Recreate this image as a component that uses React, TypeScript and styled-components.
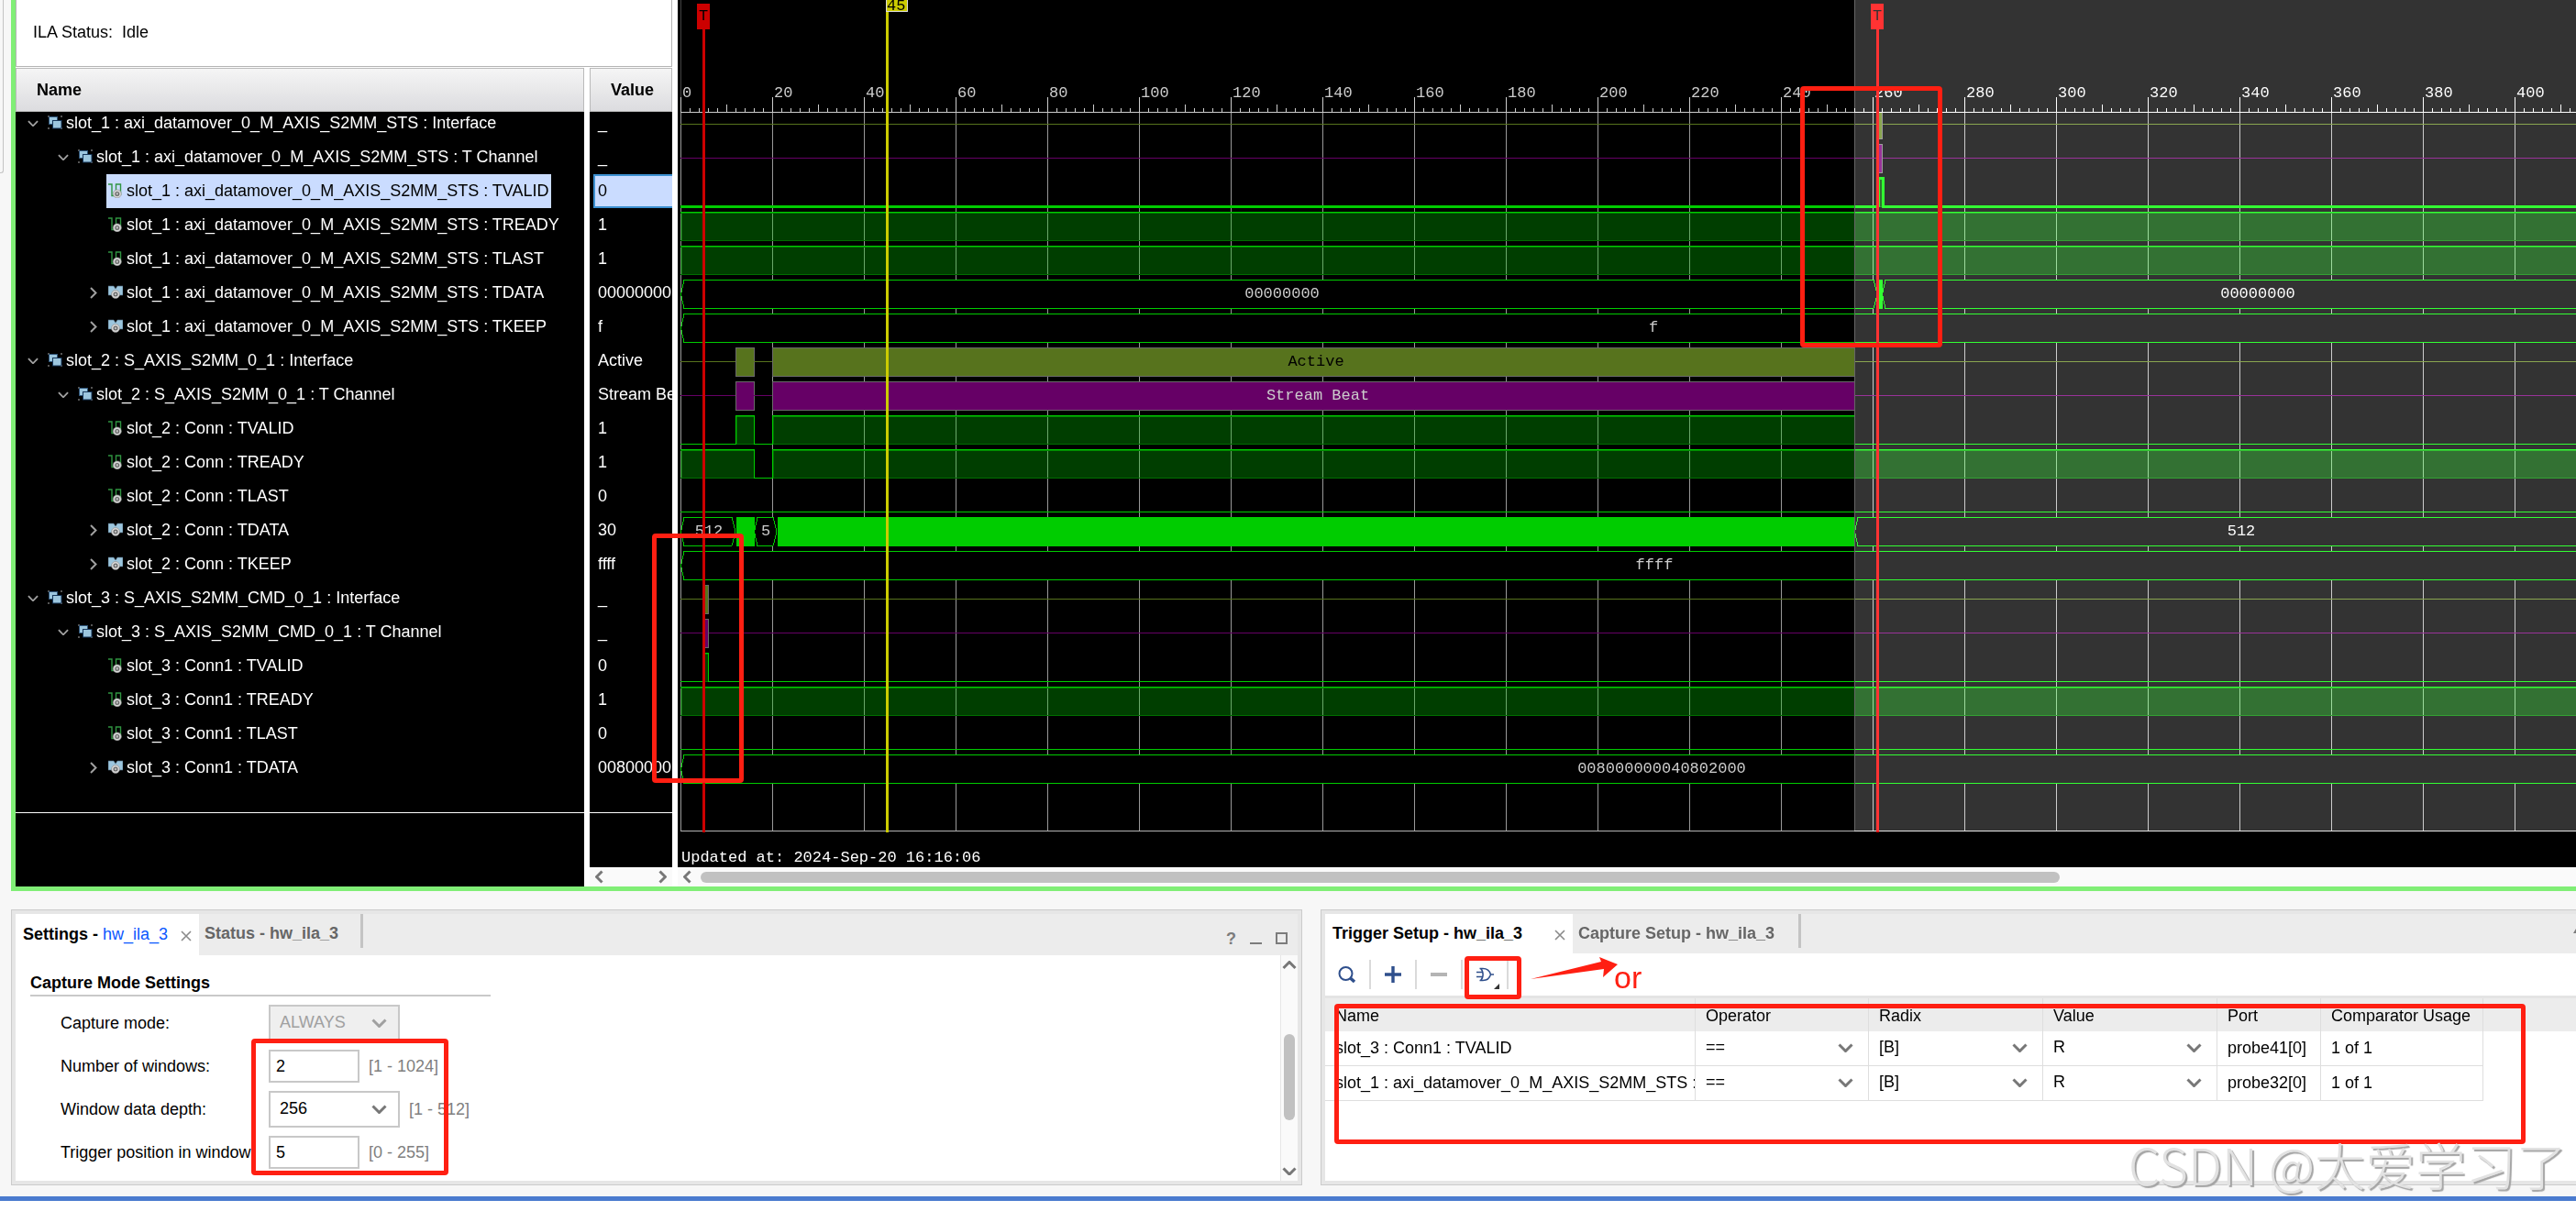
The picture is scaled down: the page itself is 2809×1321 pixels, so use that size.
import React from "react";
import styled, { createGlobalStyle, css } from "styled-components";

const sans = `"Liberation Sans", Arial, sans-serif`;
const mono = `"Liberation Mono", "Courier New", monospace`;

const GlobalStyle = createGlobalStyle`
  * { box-sizing: border-box; }
  body { margin: 0; background: #fff; font: 18px/22px ${sans}; color: #000; }
  button, input, select { font: inherit; color: inherit; margin: 0; }
`;

const ROW = 37;

/* ---------- page frame ---------- */

const Page = styled.div`
  position: relative;
  overflow: hidden;
  background: #f7f7f7;
`;

const Top = styled.div`
  display: flex;
`;

const Sliver = styled.div`
  width: 12px;
  flex: none;
  &::before {
    content: "";
    display: block;
    width: 3px;
    height: 188px;
    border: 1px solid #c4c4c4;
    border-width: 0 1px 1px 0;
    border-bottom-right-radius: 3px;
  }
`;

const Workspace = styled.main`
  flex: 1;
  min-width: 0;
  display: flex;
  gap: 6px;
  background: #fff;
  border: solid #80ee76;
  border-width: 0 0 5px 5px;
`;

const SignalPane = styled.section`
  flex: none;
  display: flex;
  flex-direction: column;
`;

const StatusBar = styled.div`
  height: 73px;
  margin-bottom: 1px;
  padding: 24px 18px 0;
  border: solid #b4b4b4;
  border-width: 0 1px 1px 1px;
  white-space: pre;
`;

const Columns = styled.div`
  flex: 1;
  display: grid;
  grid-template-columns: 620px 90px;
  gap: 6px;
`;

const Column = styled.div`
  display: flex;
  flex-direction: column;
  min-width: 0;
`;

const ColumnHead = styled.div`
  height: 48px;
  padding: 0 22px;
  line-height: 46px;
  font-weight: bold;
  background: linear-gradient(#f5f5f5, #dcdcdf);
  border: 1px solid #bababa;
`;

const DarkArea = styled.div`
  flex: 1;
  overflow: hidden;
  background: #000;
  color: #fff;
`;

const List = styled.ul`
  list-style: none;
  margin: -6px 0 0;
  padding: 0 0 30px;
  border-bottom: 1px solid #fff;
`;

const TreeRow = styled.li<{ $level: number }>`
  display: flex;
  align-items: center;
  height: ${ROW}px;
  padding-left: ${(p) => 13 + p.$level * 33}px;
`;

const Toggle = styled.button`
  display: flex;
  justify-content: center;
  width: 12px;
  padding: 0;
  border: 0;
  background: none;
`;

const TogglePlaceholder = styled.span`
  width: 12px;
`;

const NodeLabel = styled.span<{ $selected?: boolean }>`
  display: flex;
  align-items: center;
  gap: 4px;
  height: ${ROW}px;
  margin-left: 8px;
  padding: 0 2px 2px;
  white-space: nowrap;
  ${(p) =>
    p.$selected &&
    css`
      background: #cadcff;
      color: #000;
    `}
`;

const ValueRow = styled.li<{ $selected?: boolean }>`
  height: ${ROW}px;
  margin-left: 4px;
  padding-left: 5px;
  line-height: 36px;
  white-space: nowrap;
  overflow: hidden;
  ${(p) =>
    p.$selected &&
    css`
      padding-left: 3px;
      line-height: 32px;
      background: #cadcff;
      color: #000;
      border: solid #3c90d0;
      border-width: 2px 0 2px 2px;
    `}
`;

const HScroll = styled.div`
  flex: none;
  display: flex;
  align-items: center;
  justify-content: space-between;
  height: 21px;
  padding: 0 6px;
  background: #fafafa;
`;

const HThumb = styled.div`
  width: 72%;
  margin: 0 auto 0 10px;
  height: 12px;
  border-radius: 6px;
  background: #c1c1c1;
`;

const ArrowButton = styled.button`
  display: flex;
  padding: 0;
  border: 0;
  background: none;
`;

const WavePane = styled.section`
  flex: 1;
  min-width: 0;
  display: flex;
  flex-direction: column;
`;

const WaveCanvas = styled.svg`
  display: block;
  width: 100%;
  flex: 1 0 946px;
  background: #000;
  font: 17px ${mono};
  shape-rendering: crispEdges;
`;

const Brighten = styled.rect`
  mix-blend-mode: plus-lighter;
`;

/* ---------- lower panels ---------- */

const Bottom = styled.div`
  display: grid;
  grid-template-columns: minmax(0, 1408fr) minmax(0, 1369fr);
  gap: 20px;
  padding: 20px 0 12px 12px;
`;

const Panel = styled.section<{ $open?: boolean }>`
  display: flex;
  flex-direction: column;
  padding: ${(p) => (p.$open ? "4px 0 4px 4px" : "4px")};
  background: #e6e6e6;
  border: solid #cbcbcb;
  border-width: ${(p) => (p.$open ? "1px 0 1px 1px" : "1px")};
`;

const TabBar = styled.div<{ $h: number }>`
  display: flex;
  height: ${(p) => p.$h}px;
  background: #ececec;
`;

const Tab = styled.div<{ $active?: boolean; $w: number }>`
  display: flex;
  align-items: center;
  width: ${(p) => p.$w}px;
  padding: 0 8px 2px;
  font-weight: bold;
  white-space: pre;
  background: ${(p) => (p.$active ? "#fff" : "none")};
  color: ${(p) => (p.$active ? "#000" : "#666")};
  ${(p) =>
    !p.$active &&
    css`
      height: 37px;
      padding: 4px 6px 0;
      border-right: 3px solid #c4c4c4;
    `}
`;

const TabLink = styled.a`
  color: #0a57ff;
  font-weight: normal;
  text-decoration: none;
`;

const Close = styled.button`
  display: flex;
  margin-left: auto;
  padding: 4px 0 0;
  border: 0;
  background: none;
`;

const PanelTools = styled.div`
  display: flex;
  align-items: center;
  gap: 15px;
  margin-left: auto;
  padding: 8px 10px 0 0;
  color: #7c7c7c;
  font-weight: bold;
  font-size: 18px;
`;

const EdgeArrow = styled.svg`
  margin: 15px 0 0 auto;
`;

const SettingsBody = styled.div`
  flex: 1;
  display: flex;
  justify-content: space-between;
  background: #fff;
`;

const Form = styled.form`
  padding: 21px 16px 13px;
`;

const FormTitle = styled.h2`
  width: 502px;
  margin: 0 0 9px;
  padding-bottom: 4px;
  font-size: 18px;
  line-height: 18px;
  border-bottom: 2px solid #c9c9c9;
`;

const Fields = styled.div`
  display: grid;
  grid-template-columns: 227px auto;
  row-gap: 9px;
  align-items: center;
  padding-left: 33px;
`;

const FieldLabel = styled.label`
  white-space: nowrap;
`;

const Control = styled.div`
  display: flex;
  align-items: center;
  gap: 10px;
  color: #808080;
`;

const TextBox = styled.input`
  width: 99px;
  height: 36px;
  padding: 0 6px;
  color: #000;
  background: #fff;
  border: 2px solid #c8c8c8;
`;

const Combo = styled.div<{ $w?: string }>`
  display: grid;
  align-items: center;
  width: ${(p) => p.$w || "100%"};
  & > * {
    grid-area: 1 / 1;
  }
  & > svg {
    justify-self: end;
    pointer-events: none;
  }
`;

const BoxSelect = styled.select`
  appearance: none;
  height: 40px;
  padding: 0 10px 2px;
  color: #000;
  background: #fff;
  border: 2px solid #c8c8c8;
  border-radius: 0;
  &:disabled {
    color: #a0a0a0;
    background: #efefef;
    opacity: 1;
  }
  & + svg {
    margin-right: 14px;
  }
`;

const CellSelect = styled.select`
  appearance: none;
  width: 100%;
  height: 35px;
  padding: 0 0 2px;
  background: none;
  border: 0;
  & + svg {
    margin-right: 16px;
  }
`;

const VScroll = styled.div`
  display: flex;
  flex-direction: column;
  align-items: center;
  width: 19px;
  padding: 6px 0;
  background: #fafafa;
  border-left: 1px solid #e6e6e6;
`;

const VThumb = styled.div`
  width: 12px;
  height: 94px;
  margin: 70px 0 auto;
  border-radius: 6px;
  background: #c1c1c1;
`;

const Toolbar = styled.div`
  display: flex;
  height: 49px;
  padding-top: 7px;
  background: #fff;
  border-bottom: 3px solid #e4e4e4;
`;

const Tool = styled.button`
  display: flex;
  align-items: center;
  justify-content: center;
  width: 50px;
  height: 32px;
  padding: 0;
  border: 0;
  border-right: 2px solid #dadada;
  background: none;
`;

const TableArea = styled.div`
  flex: 1;
  background: #fff;
`;

const ProbeTable = styled.table`
  width: 100%;
  table-layout: fixed;
  border-spacing: 0;
  th,
  td {
    height: ${ROW}px;
    padding: 0 0 0 11px;
    text-align: left;
    font-weight: normal;
    white-space: nowrap;
    overflow: hidden;
    border-right: 1px solid #dedede;
  }
  th {
    height: 36px;
    padding-top: 2px;
    background: #ececec;
  }
  td {
    padding-bottom: 2px;
    border-bottom: 1px solid #dedede;
  }
  th:last-child,
  td:last-child {
    border: 0;
  }
`;

const Footer = styled.div`
  height: 16px;
  background: #fff;
  border-top: 5px solid #4a7bcf;
`;

/* ---------- marks drawn over the window ---------- */

const Mark = styled.div<{ $x: number; $y: number; $w: number; $h: number }>`
  position: absolute;
  left: ${(p) => p.$x}px;
  top: ${(p) => p.$y}px;
  width: ${(p) => p.$w}px;
  height: ${(p) => p.$h}px;
  border: 5px solid #ff1f12;
  border-radius: 4px;
  pointer-events: none;
`;

const ArrowMark = styled.svg`
  position: absolute;
  left: 1665px;
  top: 1043px;
`;

const OrMark = styled.span`
  position: absolute;
  left: 1760px;
  top: 1046px;
  font-size: 34px;
  line-height: 40px;
  color: #ff1f12;
`;

const Watermark = styled.span`
  position: absolute;
  right: 10px;
  top: 1231px;
  font: 300 55px/76px "Noto Sans CJK SC", sans-serif;
  white-space: nowrap;
  color: #e2e2e2;
  text-shadow: 2px 2px 1px #a4a4a4;
`;

/* ---------- icons ---------- */

type Dir = "up" | "down" | "left" | "right";
const chevronPaths: Record<Dir, string> = {
  down: "M0 0L5 5L10 0",
  up: "M0 5L5 0L10 5",
  right: "M0 0L5 5L0 10",
  left: "M5 0L0 5L5 10",
};

function Chevron({ dir, size = 12, stroke = 2, color = "#777" }: { dir: Dir; size?: number; stroke?: number; color?: string }) {
  const wide = dir === "up" || dir === "down";
  const k = 10 / (size - stroke);
  const pad = (stroke * k) / 2;
  const w = (wide ? 10 : 5) + pad * 2;
  const h = (wide ? 5 : 10) + pad * 2;
  return (
    <svg width={w / k} height={h / k} viewBox={`${-pad} ${-pad} ${w} ${h}`} aria-hidden>
      <path d={chevronPaths[dir]} fill="none" stroke={color} strokeWidth={stroke * k} />
    </svg>
  );
}

const InterfaceIcon = () => (
  <svg width="16" height="16" viewBox="0 0 16 16" aria-hidden>
    <path d="M0 0h2v2h-2zM14 0h2v2h-2zM0 13h2v2h-2zM14 13h2v2h-2z" fill="#555" />
    <rect x="1.5" y="1.5" width="9" height="8" fill="#9cc6de" stroke="#2f5478" />
    <rect x="5.5" y="5.5" width="9.5" height="8.5" fill="#9cc6de" stroke="#16365a" />
  </svg>
);

const Gear = ({ cx, cy }: { cx: number; cy: number }) => (
  <g>
    <circle cx={cx} cy={cy} r="4.5" fill="#d6d6d6" stroke="#8a8a8a" strokeWidth="0.6" />
    <circle cx={cx} cy={cy} r="1.9" fill="#bbb" stroke="#666" strokeWidth="1.2" />
  </g>
);

const SignalIcon = () => (
  <svg width="16" height="16" viewBox="0 0 16 16" aria-hidden>
    <path d="M0 1H4V13.5H8.5V1H13.5V13" fill="none" stroke="#2f9440" strokeWidth="1.4" />
    <Gear cx={9.8} cy={11.4} />
  </svg>
);

const BusIcon = () => (
  <svg width="16" height="16" viewBox="0 0 16 16" aria-hidden>
    <path d="M0 1H6L8 4L10 1H16V11H12L8 7L4 11H0Z" fill="#9cc6de" stroke="#4a6478" strokeWidth="0.6" />
    <Gear cx={8} cy={10} />
  </svg>
);

const CloseIcon = () => (
  <svg width="12" height="12" viewBox="0 0 12 12" aria-hidden>
    <path d="M1 1L11 11M11 1L1 11" stroke="#8a8a8a" strokeWidth="1.6" />
  </svg>
);

/* ---------- data ---------- */

type Kind = "iface" | "signal" | "bus";
interface Segment {
  from: number;
  to?: number;
  kind: "high" | "low" | "bus" | "solid" | "box" | "idle";
  text?: string;
  at?: number;
}
interface Signal {
  level: number;
  kind: Kind;
  name: string;
  value: string;
  selected?: boolean;
  tone?: "olive" | "purple";
  wave: Segment[];
}

const sts = "axi_datamover_0_M_AXIS_S2MM_STS";
const burst = (text: string, at: number): Segment[] => [
  { from: 0, to: 12, kind: "idle" },
  { from: 12, to: 16, kind: "box" },
  { from: 16, to: 20, kind: "idle" },
  { from: 20, to: 256, kind: "box", text, at },
  { from: 256, kind: "idle" },
];
const blip = (at: number): Segment[] => [
  { from: 0, kind: "idle" },
  { from: at, to: at + 1, kind: "box" },
];
const pulse = (at: number): Segment[] => [
  { from: 0, to: at, kind: "low" },
  { from: at, to: at + 1, kind: "high" },
  { from: at + 1, kind: "low" },
];
const high: Segment[] = [{ from: 0, kind: "high" }];
const low: Segment[] = [{ from: 0, kind: "low" }];

const signals: Signal[] = [
  { level: 0, kind: "iface", name: `slot_1 : ${sts} : Interface`, value: "_", tone: "olive", wave: blip(261) },
  { level: 1, kind: "iface", name: `slot_1 : ${sts} : T Channel`, value: "_", tone: "purple", wave: blip(261) },
  { level: 2, kind: "signal", name: `slot_1 : ${sts} : TVALID`, value: "0", selected: true, wave: pulse(261) },
  { level: 2, kind: "signal", name: `slot_1 : ${sts} : TREADY`, value: "1", wave: high },
  { level: 2, kind: "signal", name: `slot_1 : ${sts} : TLAST`, value: "1", wave: high },
  {
    level: 2, kind: "bus", name: `slot_1 : ${sts} : TDATA`, value: "00000000",
    wave: [
      { from: 0, to: 261, kind: "bus", text: "00000000", at: 659 },
      { from: 261, to: 262, kind: "solid" },
      { from: 262, kind: "bus", text: "00000000", at: 1723 },
    ],
  },
  { level: 2, kind: "bus", name: `slot_1 : ${sts} : TKEEP`, value: "f", wave: [{ from: 0, kind: "bus", text: "f", at: 1064 }] },
  { level: 0, kind: "iface", name: "slot_2 : S_AXIS_S2MM_0_1 : Interface", value: "Active", tone: "olive", wave: burst("Active", 696) },
  { level: 1, kind: "iface", name: "slot_2 : S_AXIS_S2MM_0_1 : T Channel", value: "Stream Beat", tone: "purple", wave: burst("Stream Beat", 698) },
  {
    level: 2, kind: "signal", name: "slot_2 : Conn : TVALID", value: "1",
    wave: [
      { from: 0, to: 12, kind: "low" },
      { from: 12, to: 16, kind: "high" },
      { from: 16, to: 20, kind: "low" },
      { from: 20, to: 256, kind: "high" },
      { from: 256, kind: "low" },
    ],
  },
  {
    level: 2, kind: "signal", name: "slot_2 : Conn : TREADY", value: "1",
    wave: [
      { from: 0, to: 16, kind: "high" },
      { from: 16, to: 20, kind: "low" },
      { from: 20, kind: "high" },
    ],
  },
  { level: 2, kind: "signal", name: "slot_2 : Conn : TLAST", value: "0", wave: low },
  {
    level: 2, kind: "bus", name: "slot_2 : Conn : TDATA", value: "30",
    wave: [
      { from: 0, to: 12, kind: "bus", text: "512", at: 34 },
      { from: 12, to: 16, kind: "solid" },
      { from: 16, to: 21, kind: "bus", text: "5", at: 96 },
      { from: 21, to: 256, kind: "solid" },
      { from: 256, kind: "bus", text: "512", at: 1705 },
    ],
  },
  { level: 2, kind: "bus", name: "slot_2 : Conn : TKEEP", value: "ffff", wave: [{ from: 0, kind: "bus", text: "ffff", at: 1065 }] },
  { level: 0, kind: "iface", name: "slot_3 : S_AXIS_S2MM_CMD_0_1 : Interface", value: "_", tone: "olive", wave: blip(5) },
  { level: 1, kind: "iface", name: "slot_3 : S_AXIS_S2MM_CMD_0_1 : T Channel", value: "_", tone: "purple", wave: blip(5) },
  { level: 2, kind: "signal", name: "slot_3 : Conn1 : TVALID", value: "0", wave: pulse(5) },
  { level: 2, kind: "signal", name: "slot_3 : Conn1 : TREADY", value: "1", wave: high },
  { level: 2, kind: "signal", name: "slot_3 : Conn1 : TLAST", value: "0", wave: low },
  { level: 2, kind: "bus", name: "slot_3 : Conn1 : TDATA", value: "00800000", wave: [{ from: 0, kind: "bus", text: "008000000040802000", at: 1073 }] },
];

const icons: Record<Kind, () => React.JSX.Element> = { iface: InterfaceIcon, signal: SignalIcon, bus: BusIcon };

/* ---------- waveform ---------- */

const px = (sample: number) => 3 + sample * 5;
const RULER = 122;
const FLOOR = 906;
const LIT = "#00cc00";
const tones = { olive: "#57731d", purple: "#660066" };

function Part({ seg, y, tone, thick, index }: { seg: Segment; y: number; tone?: "olive" | "purple"; thick?: boolean; index: number }) {
  const x = px(seg.from);
  const open = seg.to === undefined;
  const w = open ? "100%" : px(seg.to as number) - x;
  const x2 = open ? 4000 : px(seg.to as number);
  const t = thick ? 3 : 1;
  const o = thick ? 1 : 0;
  const paint = tone ? tones[tone] : LIT;
  const label = seg.text && (
    <text x={seg.at} y={y + 24} textAnchor="middle" fill={tone === "olive" ? "#000" : "#ccc"}>
      {seg.text}
    </text>
  );
  if (seg.kind === "idle") return <rect x={x} y={y + 19} width={w} height={1} fill={paint} />;
  if (seg.kind === "box")
    return (
      <g>
        <rect x={x + 0.5} y={y + 4.5} width={w} height={31} fill={paint} stroke="#6a6a6a" />
        {label}
      </g>
    );
  if (seg.kind === "solid") return <rect x={x + 1} y={y + 4} width={w} height={32} fill={LIT} />;
  if (seg.kind === "low")
    return (
      <g fill={LIT}>
        <rect x={x} y={y + 35 - o} width={w} height={t} />
        {index > 0 && <rect x={x} y={y + 4 - o} width={t} height={32 + o} />}
      </g>
    );
  if (seg.kind === "high")
    return (
      <g>
        <rect x={x} y={y + 5} width={w} height={31} fill={LIT} opacity={0.3} />
        <rect x={x} y={y + 35} width={w} height={1} fill="#006e00" />
        <rect x={x + 1} y={y + 5} width={1} height={31} fill="#006e00" />
        <rect x={x} y={y + 5} width={w} height={1} fill="#008400" />
        <rect x={x} y={y + 4 - o} width={w} height={t} fill={LIT} />
        {index > 0 && <rect x={x} y={y + 4 - o} width={t} height={32 + o} fill={LIT} />}
      </g>
    );
  const top = y + 4.5;
  const bottom = y + 35.5;
  const mid = y + 20;
  const right = open
    ? `M${x + 4} ${top}H${x2}V${bottom}H${x + 4}`
    : `M${x + 4} ${top}H${x2 - 4}L${x2} ${mid}L${x2 - 4} ${bottom}H${x + 4}`;
  return (
    <g>
      <path d={`${right}L${x + 0.5} ${mid}Z`} fill="#000" stroke={LIT} />
      {label}
    </g>
  );
}

function Trigger({ at }: { at: number }) {
  const x = px(at);
  return (
    <g>
      <rect x={x - 1} y={4} width={3} height={FLOOR - 2} fill="#cc0000" />
      <rect x={x - 7} y={4} width={14} height={28} fill="#cc0000" />
      <text x={x} y={22} textAnchor="middle" fill="#000">
        T
      </text>
    </g>
  );
}

function Waveform() {
  const ticks = Array.from({ length: 207 }, (_, i) => i * 2);
  const majors = Array.from({ length: 21 }, (_, i) => i * 20);
  return (
    <WaveCanvas role="img" aria-label="Captured waveform">
      {majors.map((s) => (
        <rect key={s} x={px(s)} y={RULER} width={1} height={FLOOR - RULER} fill="#999" />
      ))}
      <rect x={3} y={FLOOR} width="100%" height={1} fill="#b4b4b4" />
      {signals.map((sig, row) => (
        <g key={sig.name}>
          {sig.wave.map((seg, i) => (
            <Part key={i} index={i} seg={seg} y={116 + row * ROW} tone={sig.tone} thick={sig.selected} />
          ))}
        </g>
      ))}
      <rect width="100%" height={RULER} fill="#000" />
      <rect x={3} width={1} height={RULER} fill="#444" />
      <rect x={px(256)} width={1} height={FLOOR} fill="#333" />
      <g fill="#ccc">
        <rect x={3} y={RULER} width="100%" height={1} />
        {ticks.map((s) => {
          const h = s % 20 === 0 ? 16 : s % 10 === 0 ? 8 : 4;
          return <rect key={s} x={px(s)} y={RULER - h} width={1} height={h} />;
        })}
        {majors.map((s) => (
          <text key={s} x={px(s) + 2} y={106}>
            {s}
          </text>
        ))}
      </g>
      <Trigger at={5} />
      <Trigger at={261} />
      <rect x={px(45) - 1} width={3} height={FLOOR + 2} fill="#cccc00" />
      <rect x={px(45) - 1} y={-1} width={23} height={13} fill="#cccc00" stroke="#ddd" />
      <text x={px(45)} y={11} fill="#000">
        45
      </text>
      <Brighten x={px(256)} width="100%" height={FLOOR + 1} fill="#333" />
      <text x={4} y={940} fill="#fff">
        Updated at: 2024-Sep-20 16:16:06
      </text>
    </WaveCanvas>
  );
}

/* ---------- panels ---------- */

const probes = [
  { name: "slot_3 : Conn1 : TVALID", port: "probe41[0]" },
  { name: `slot_1 : ${sts} : TVALID`, port: "probe32[0]" },
];

function CellCombo({ label, value }: { label: string; value: string }) {
  return (
    <Combo>
      <CellSelect aria-label={label} defaultValue={value}>
        <option>{value}</option>
      </CellSelect>
      <Chevron dir="down" size={17} stroke={3} />
    </Combo>
  );
}

function SettingsPanel() {
  return (
    <Panel>
      <TabBar $h={45}>
        <Tab $active $w={200}>
          Settings - <TabLink href="#hw_ila_3">hw_ila_3</TabLink>
          <Close aria-label="Close Settings">
            <CloseIcon />
          </Close>
        </Tab>
        <Tab $w={179}>Status - hw_ila_3</Tab>
        <PanelTools>
          <span>?</span>
          <svg width="13" height="14" aria-hidden>
            <path d="M0 12H13" stroke="#7c7c7c" strokeWidth="2" />
          </svg>
          <svg width="14" height="14" aria-hidden>
            <rect x="1" y="1" width="11" height="11" fill="none" stroke="#7c7c7c" strokeWidth="2" />
          </svg>
        </PanelTools>
      </TabBar>
      <SettingsBody>
        <Form>
          <FormTitle>Capture Mode Settings</FormTitle>
          <Fields>
            <FieldLabel htmlFor="mode">Capture mode:</FieldLabel>
            <Control>
              <Combo $w="143px">
                <BoxSelect id="mode" disabled defaultValue="ALWAYS">
                  <option>ALWAYS</option>
                </BoxSelect>
                <Chevron dir="down" size={17} stroke={3} color="#a0a0a0" />
              </Combo>
            </Control>
            <FieldLabel htmlFor="windows">Number of windows:</FieldLabel>
            <Control>
              <TextBox id="windows" defaultValue="2" />
              <span>[1 - 1024]</span>
            </Control>
            <FieldLabel htmlFor="depth">Window data depth:</FieldLabel>
            <Control>
              <Combo $w="143px">
                <BoxSelect id="depth" defaultValue="256">
                  <option>256</option>
                </BoxSelect>
                <Chevron dir="down" size={17} stroke={3} />
              </Combo>
              <span>[1 - 512]</span>
            </Control>
            <FieldLabel htmlFor="position">Trigger position in window:</FieldLabel>
            <Control>
              <TextBox id="position" defaultValue="5" />
              <span>[0 - 255]</span>
            </Control>
          </Fields>
        </Form>
        <VScroll>
          <ArrowButton aria-label="Scroll up">
            <Chevron dir="up" size={16} stroke={3} />
          </ArrowButton>
          <VThumb />
          <ArrowButton aria-label="Scroll down">
            <Chevron dir="down" size={16} stroke={3} />
          </ArrowButton>
        </VScroll>
      </SettingsBody>
    </Panel>
  );
}

function TriggerPanel() {
  return (
    <Panel $open>
      <TabBar $h={43}>
        <Tab $active $w={270}>
          Trigger Setup - hw_ila_3
          <Close aria-label="Close Trigger Setup">
            <CloseIcon />
          </Close>
        </Tab>
        <Tab $w={249}>Capture Setup - hw_ila_3</Tab>
        <EdgeArrow width="3" height="10" aria-hidden>
          <path d="M3 1L0 6H3Z" fill="#7c7c7c" />
        </EdgeArrow>
      </TabBar>
      <Toolbar>
        <Tool aria-label="Search">
          <svg width="20" height="20" viewBox="0 0 20 20">
            <circle cx="8.5" cy="9" r="7" fill="none" stroke="#2f4f8c" strokeWidth="2" />
            <path d="M13 13.5L18 18" stroke="#2f4f8c" strokeWidth="3.5" />
          </svg>
        </Tool>
        <Tool aria-label="Add probe">
          <svg width="20" height="20" viewBox="0 0 20 20">
            <path d="M10 1V19M1 10H19" stroke="#2f4f8c" strokeWidth="3.4" />
          </svg>
        </Tool>
        <Tool aria-label="Remove probe">
          <svg width="20" height="20" viewBox="0 0 20 20">
            <path d="M1 10H19" stroke="#b4b4b4" strokeWidth="4" />
          </svg>
        </Tool>
        <Tool aria-label="Trigger condition">
          <svg width="32" height="32" viewBox="0 0 32 32">
            <path
              d="M10.5 9.5H14C19 9.5 21.5 12.5 22.5 16C21.5 19.5 19 22.5 14 22.5H10.5M11.5 9.5C15 12.5 15 19.5 11.5 22.5M7 13.5H14M7 18.5H14M22.5 16H26"
              fill="none"
              stroke="#2f4f8c"
              strokeWidth="1.5"
            />
            <path d="M32 26V32H26Z" fill="#333" />
          </svg>
        </Tool>
      </Toolbar>
      <TableArea>
        <ProbeTable>
          <colgroup>
            <col width="404" />
            <col width="189" />
            <col width="190" />
            <col width="190" />
            <col width="113" />
            <col width="177" />
            <col />
          </colgroup>
          <thead>
            <tr>
              <th>Name</th>
              <th>Operator</th>
              <th>Radix</th>
              <th>Value</th>
              <th>Port</th>
              <th>Comparator Usage</th>
              <th aria-hidden />
            </tr>
          </thead>
          <tbody>
            {probes.map((p) => (
              <tr key={p.port}>
                <td>{p.name}</td>
                <td>
                  <CellCombo label="Operator" value="==" />
                </td>
                <td>
                  <CellCombo label="Radix" value="[B]" />
                </td>
                <td>
                  <CellCombo label="Value" value="R" />
                </td>
                <td>{p.port}</td>
                <td>1 of 1</td>
                <td aria-hidden />
              </tr>
            ))}
          </tbody>
        </ProbeTable>
      </TableArea>
    </Panel>
  );
}

export default function App() {
  return (
    <Page>
      <GlobalStyle />
      <Top>
        <Sliver />
        <Workspace>
          <SignalPane>
            <StatusBar>ILA Status:  Idle</StatusBar>
            <Columns>
              <Column>
                <ColumnHead>Name</ColumnHead>
                <DarkArea>
                  <List>
                    {signals.map((s) => {
                      const Icon = icons[s.kind];
                      return (
                        <TreeRow key={s.name} $level={s.level}>
                          {s.kind === "signal" ? (
                            <TogglePlaceholder />
                          ) : (
                            <Toggle aria-label={`Toggle ${s.name}`}>
                              <Chevron dir={s.kind === "bus" ? "right" : "down"} size={13} stroke={2} color="#a0a0a0" />
                            </Toggle>
                          )}
                          <NodeLabel $selected={s.selected}>
                            <Icon />
                            {s.name}
                          </NodeLabel>
                        </TreeRow>
                      );
                    })}
                  </List>
                </DarkArea>
              </Column>
              <Column>
                <ColumnHead>Value</ColumnHead>
                <DarkArea>
                  <List>
                    {signals.map((s) => (
                      <ValueRow key={s.name} $selected={s.selected}>
                        {s.value}
                      </ValueRow>
                    ))}
                  </List>
                </DarkArea>
                <HScroll>
                  <ArrowButton aria-label="Scroll values left">
                    <Chevron dir="left" size={15} stroke={3} />
                  </ArrowButton>
                  <ArrowButton aria-label="Scroll values right">
                    <Chevron dir="right" size={15} stroke={3} />
                  </ArrowButton>
                </HScroll>
              </Column>
            </Columns>
          </SignalPane>
          <WavePane>
            <Waveform />
            <HScroll>
              <ArrowButton aria-label="Scroll waveform left">
                <Chevron dir="left" size={15} stroke={3} />
              </ArrowButton>
              <HThumb />
            </HScroll>
          </WavePane>
        </Workspace>
      </Top>
      <Bottom>
        <SettingsPanel />
        <TriggerPanel />
      </Bottom>
      <Footer />
      <Mark $x={1963} $y={94} $w={155} $h={285} />
      <Mark $x={711} $y={582} $w={100} $h={272} />
      <Mark $x={274} $y={1133} $w={215} $h={149} />
      <Mark $x={1597} $y={1043} $w={62} $h={47} />
      <Mark $x={1455} $y={1095} $w={1299} $h={153} />
      <ArrowMark width="100" height="28" viewBox="0 0 100 28" aria-hidden>
        <path d="M4 25L81 6L79 1L99 9L83 23L84 14Z" fill="#ff1f12" />
      </ArrowMark>
      <OrMark>or</OrMark>
      <Watermark>CSDN @太爱学习了</Watermark>
    </Page>
  );
}
